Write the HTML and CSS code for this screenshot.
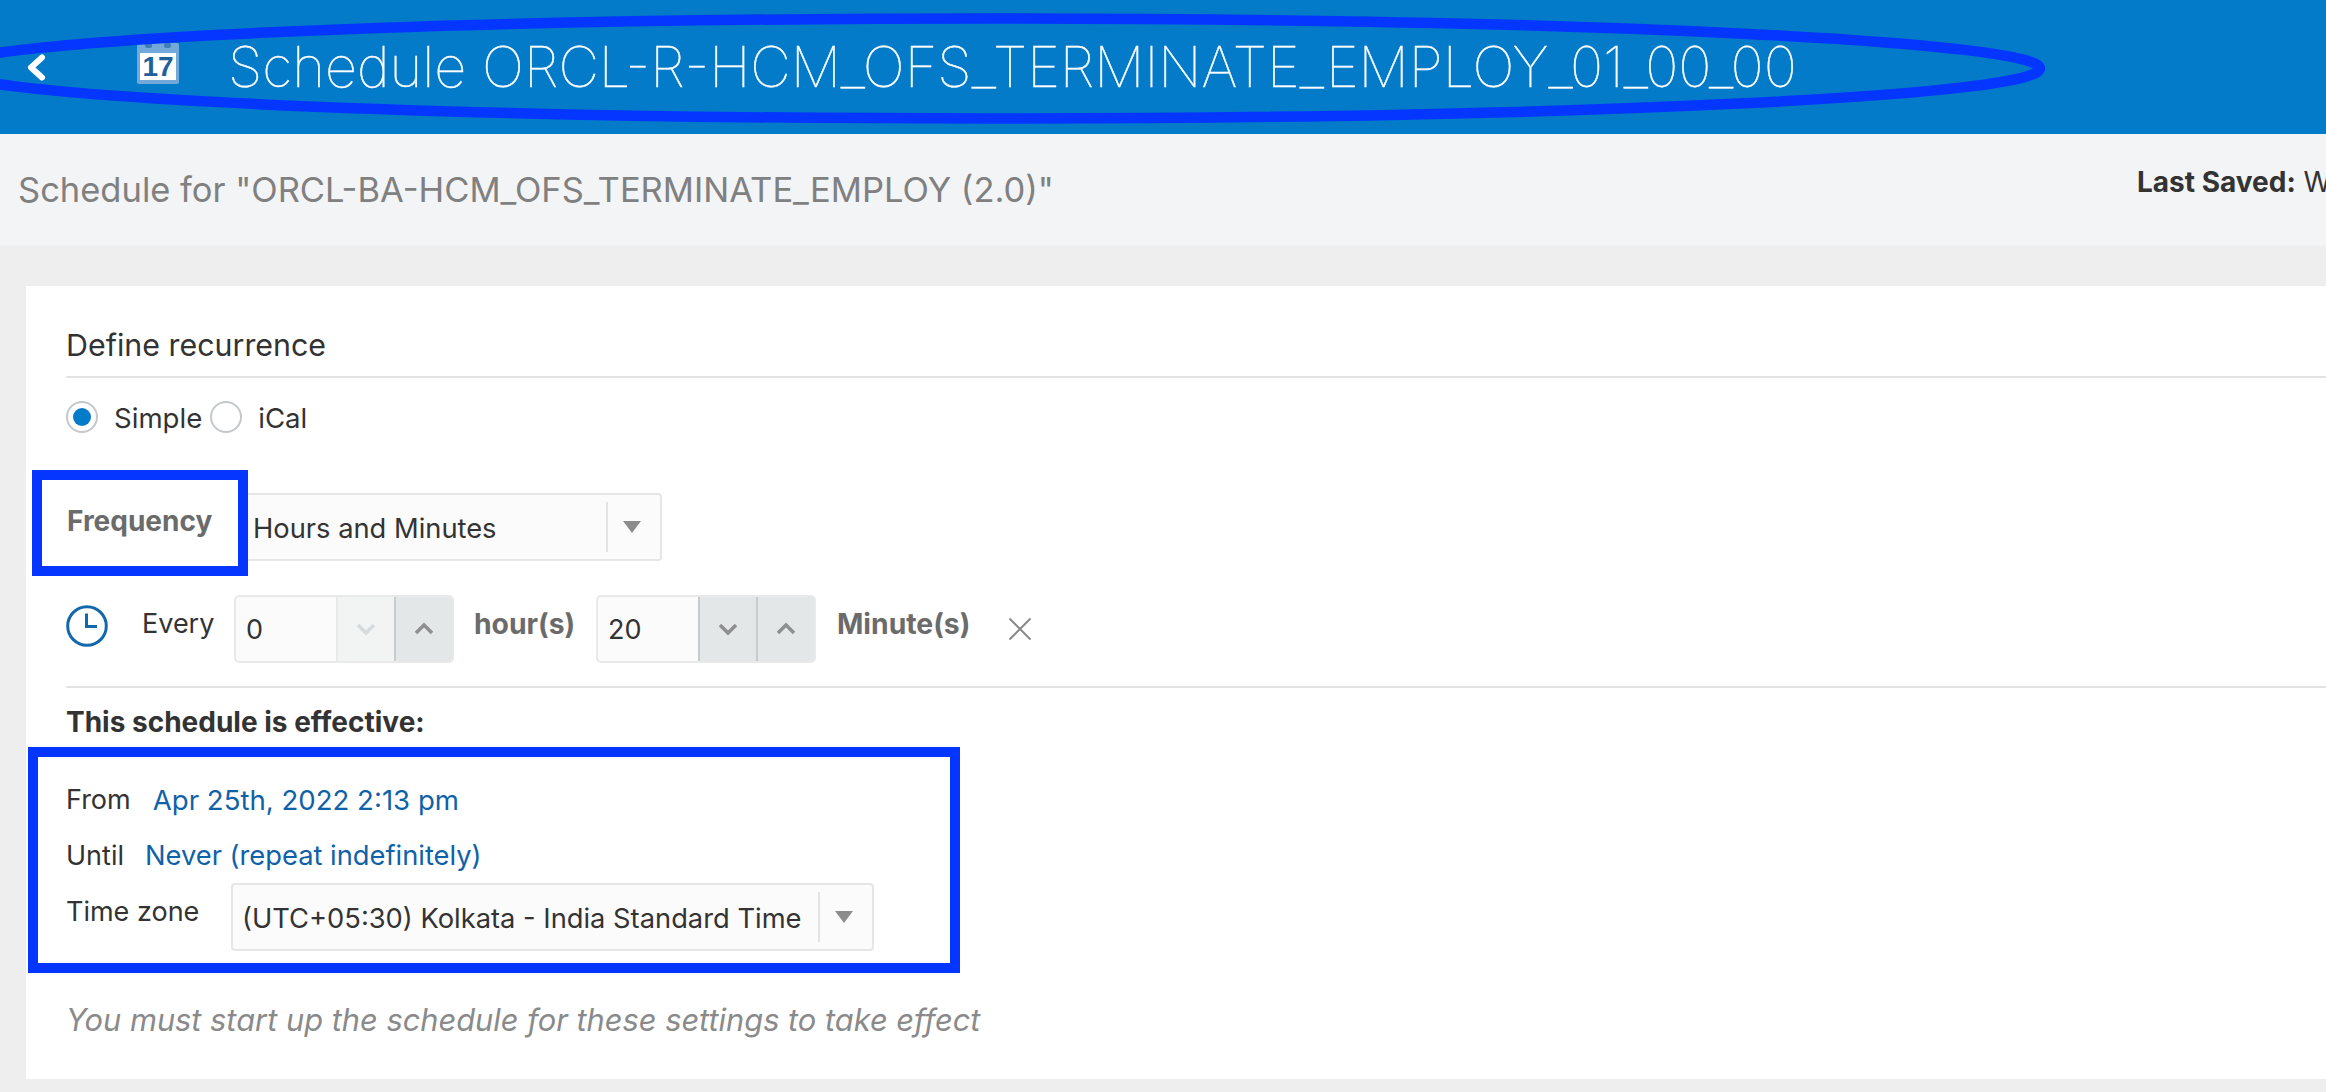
FILE: index.html
```html
<!DOCTYPE html>
<html lang="en">
<head>
<meta charset="utf-8">
<title>Schedule</title>
<link rel="stylesheet" href="styles.css">
</head>
<body>
<div class="page">
  <header class="topbar">
    <svg class="back" viewBox="0 0 21 27"><path d="M17 3.5 6 13.5 17 23.5" fill="none" stroke="#fff" stroke-width="6" stroke-linecap="round" stroke-linejoin="round"/></svg>
    <div class="cal">
      <span class="ring ring-l"></span><span class="ring ring-r"></span>
      <span class="cal-face">17</span>
    </div>
    <h1 class="title">Schedule ORCL-R-HCM_OFS_TERMINATE_EMPLOY_01_00_00</h1>
    <svg class="oval" viewBox="0 0 2326 134"><ellipse cx="993" cy="68.5" rx="1047" ry="50" fill="none" stroke="#0536ff" stroke-width="10.5"/></svg>
  </header>
  <div class="subbar">
    <div class="sub-title">Schedule for "ORCL-BA-HCM_OFS_TERMINATE_EMPLOY (2.0)"</div>
    <div class="saved"><b>Last Saved:</b> W</div>
  </div>
  <main class="panel">
    <h2 class="section">Define recurrence</h2>
    <div class="radios">
      <span class="radio on"></span><span class="radio-label">Simple</span>
      <span class="radio second"></span><span class="radio-label ical">iCal</span>
    </div>
    <div class="freq">
      <label class="freq-label">Frequency</label>
      <div class="select freq-select">
        <span class="select-text">Hours and Minutes</span>
        <span class="select-arrow"></span>
      </div>
    </div>
    <div class="every">
      <svg class="clock" viewBox="0 0 42 42"><circle cx="21" cy="21" r="19.3" fill="none" stroke="#1268ab" stroke-width="3"/><path d="M20.5 8.5V21.5H31" fill="none" stroke="#1268ab" stroke-width="3"/></svg>
      <span class="every-label">Every</span>
      <div class="spinner">
        <span class="spin-value">0</span>
        <span class="spin-btn faint"><svg viewBox="0 0 22 14"><path d="M3 3 11 11 19 3" fill="none" stroke="#d5dbdc" stroke-width="3.5"/></svg></span>
        <span class="spin-btn"><svg viewBox="0 0 22 14"><path d="M3 11 11 3 19 11" fill="none" stroke="#8d8f90" stroke-width="3.5"/></svg></span>
      </div>
      <span class="unit hours">hour(s)</span>
      <div class="spinner second-spin">
        <span class="spin-value">20</span>
        <span class="spin-btn"><svg viewBox="0 0 22 14"><path d="M3 3 11 11 19 3" fill="none" stroke="#8d8f90" stroke-width="3.5"/></svg></span>
        <span class="spin-btn"><svg viewBox="0 0 22 14"><path d="M3 11 11 3 19 11" fill="none" stroke="#8d8f90" stroke-width="3.5"/></svg></span>
      </div>
      <span class="unit minutes">Minute(s)</span>
      <svg class="close" viewBox="0 0 24 24"><path d="M1.5 1.5 22.5 22.5M22.5 1.5 1.5 22.5" fill="none" stroke="#8a8a8a" stroke-width="2"/></svg>
    </div>
    <div class="rule"></div>
    <div class="effective">This schedule is effective:</div>
    <div class="range">
      <div class="range-row"><span>From</span><a class="link from-link">Apr 25th, 2022 2:13 pm</a></div>
      <div class="range-row until"><span>Until</span><a class="link until-link">Never (repeat indefinitely)</a></div>
      <div class="zone">
        <span class="zone-label">Time zone</span>
        <div class="select zone-select">
          <span class="select-text">(UTC+05:30) Kolkata - India Standard Time</span>
          <span class="select-arrow"></span>
        </div>
      </div>
    </div>
    <p class="note">You must start up the schedule for these settings to take effect</p>
  </main>
</div>
</body>
</html>
```
FILE: styles.css
```css
* { box-sizing: border-box; }
html, body { margin: 0; height: 100%; }
body { background: #eeeeee; font-family: Inter, "Liberation Sans", sans-serif; color: #333; overflow: hidden; }
.page { width: 2326px; height: 1092px; overflow: hidden; }

.topbar { position: relative; height: 134px; background: #047bc9; display: flex; align-items: center; overflow: hidden; }
.back { width: 21px; height: 27px; margin-left: 25px; flex: none; }
.cal { position: relative; flex: none; width: 42px; height: 41px; margin-left: 91px; margin-top: -7px; background: #73a9da; border-radius: 2px; padding: 10px 3px 4px; }
.ring { position: absolute; top: 0; width: 7px; height: 5px; background: #3f7fb5; border-radius: 2px; }
.ring-l { left: 8px; }
.ring-r { right: 8px; }
.cal-face { display: block; height: 100%; background: #fff; color: #22609c; font: 700 28px/27px "Liberation Sans", sans-serif; text-align: center; }
.title { margin: 0 0 0 49px; font-weight: 100; font-size: 56px; line-height: 70px; color: #fff; -webkit-text-stroke: 0.5px #fff; white-space: nowrap; }
.oval { position: absolute; left: 0; top: 0; width: 2326px; height: 134px; pointer-events: none; }

.subbar { height: 112px; background: #f3f4f6; display: flex; overflow: hidden; white-space: nowrap; }
.sub-title { flex: 0 0 2137px; padding: 37px 0 0 18px; font-size: 34.5px; line-height: 38px; color: #808080; }
.saved { flex: none; padding-top: 30px; font-size: 28px; line-height: 36px; color: #333; }
.saved b { font-weight: 700; }

.panel { margin: 40px 0 13px 26px; height: 793px; background: #fff; padding: 41px 0 0 40px; }
.section { margin: 0; padding-bottom: 13px; border-bottom: 2px solid #e3e3e3; font-weight: 400; font-size: 30.4px; line-height: 36px; color: #333; }

.radios { display: flex; align-items: center; height: 32px; margin-top: 23px; font-size: 27.6px; }
.radio { position: relative; flex: none; width: 32px; height: 32px; border-radius: 50%; border: 2px solid #c4c8ca; background: #fff; }
.radio.on::after { content: ""; position: absolute; left: 5px; top: 5px; width: 18px; height: 18px; border-radius: 50%; background: #047bc9; }
.radio-label { margin-left: 16px; line-height: 32px; padding-top: 2px; }
.radio.second { margin-left: 8px; }
.radio-label.ical { margin-left: 16px; }

.freq { display: flex; align-items: flex-start; height: 106px; margin-top: 37px; }
.freq-label { position: relative; z-index: 1; flex: none; width: 216px; height: 106px; margin-left: -34px; padding: 22px 0 0 25px; border: 10px solid #0536ff; background: #fff; font-weight: 700; font-size: 28px; line-height: 38px; color: #6b6b6b; }
.select { display: flex; align-items: center; flex: none; height: 68px; background: #fbfbfb; border: 2px solid #e6e6e6; border-radius: 4px; font-size: 27.3px; color: #333; white-space: nowrap; position: relative; }
.freq-select { width: 424px; margin: 23px 0 0 -10px; padding-left: 13px; }
.select-text { flex: 1; line-height: 36px; margin-top: 3px; }
.select-arrow { flex: none; position: relative; width: 54px; height: 50px; border-left: 2px solid #e3e3e3; }
.select-arrow::after { content: ""; position: absolute; left: 15px; top: 19px; border-style: solid; border-width: 12px 9px 0; border-color: #8c8c8c transparent transparent; }

.every { display: flex; align-items: center; height: 68px; margin-top: 19px; }
.clock { flex: none; width: 42px; height: 42px; margin-bottom: 6px; }
.every-label { margin-left: 34px; width: 92px; flex: none; font-size: 27px; line-height: 36px; padding-bottom: 10px; box-sizing: content-box; }
.spinner { display: flex; flex: none; width: 220px; height: 68px; background: #fbfbfb; border: 2px solid #e9e9e9; border-radius: 5px; overflow: hidden; }
.spin-value { flex: 1; padding: 4px 0 0 10px; font-size: 27px; line-height: 58px; color: #333; }
.spin-btn { flex: none; width: 58px; display: flex; align-items: center; justify-content: center; background: #e4e7e8; border-left: 2px solid #c8cbcc; }
.spin-btn.faint { background: #f2f4f4; border-left-color: #e9e9e9; }
.spin-btn svg { width: 22px; height: 14px; }
.unit { flex: none; font-weight: 700; font-size: 28.3px; line-height: 36px; color: #6b6b6b; padding-bottom: 10px; }
.hours { margin-left: 20px; width: 122px; }
.second-spin { width: 220px; }
.minutes { margin-left: 21px; }
.close { flex: none; width: 24px; height: 24px; margin-left: 38px; }

.rule { height: 2px; margin-top: 23px; background: #e3e3e3; }
.effective { margin-top: 16px; font-weight: 700; font-size: 28px; line-height: 36px; color: #333; }

.range { width: 932px; height: 226px; margin: 7px 0 0 -38px; padding: 25px 0 0 28px; border: 10px solid #0536ff; font-size: 27px; }
.range-row { display: flex; line-height: 36px; color: #333; }
.until { margin-top: 20px; }
.link { color: #0f62a8; font-size: 27.6px; }
.from-link { margin-left: 22px; }
.until-link { margin-left: 21px; font-size: 27.3px; }
.zone { display: flex; align-items: flex-start; margin-top: 9px; }
.zone-label { flex: none; width: 165px; margin-top: 11px; line-height: 36px; }
.zone-select { width: 643px; padding-left: 9px; }

.note { margin: 29px 0 0; font-style: italic; font-size: 30.8px; line-height: 36px; color: #8a8a8a; }
```
